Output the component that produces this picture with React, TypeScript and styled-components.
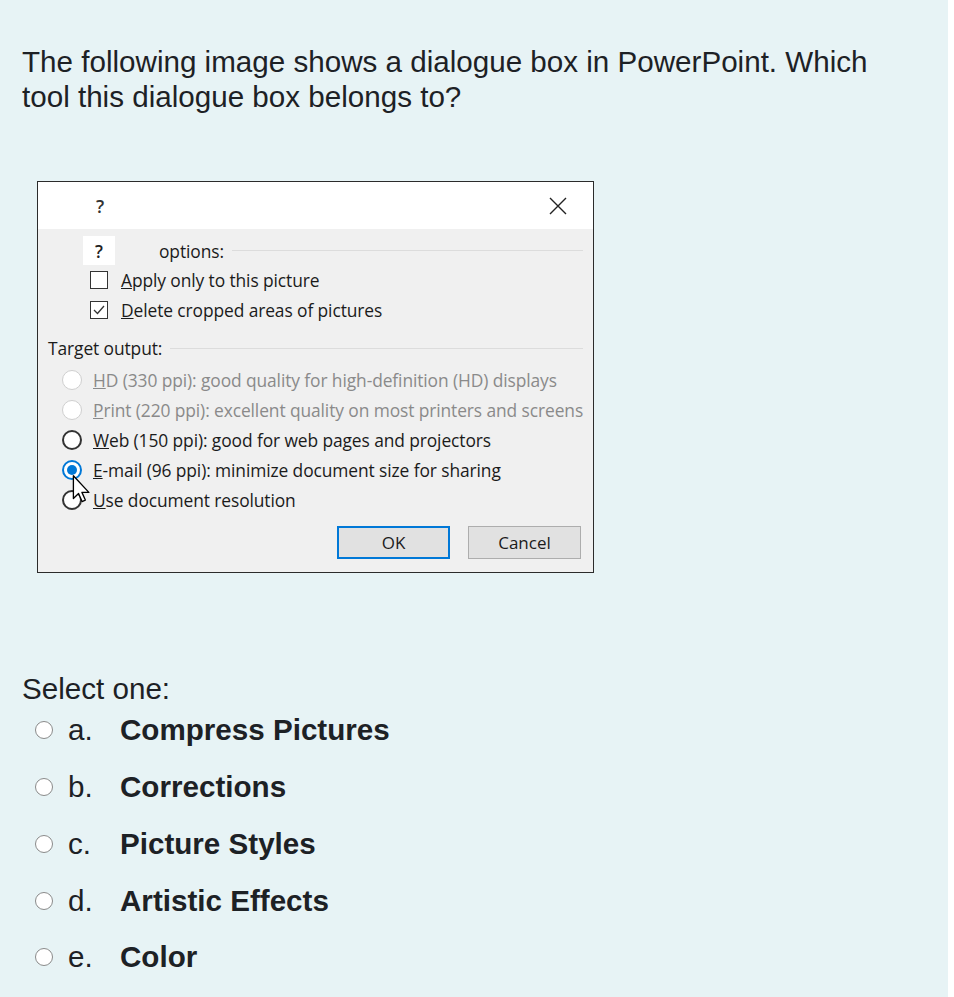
import React from "react";
import styled, { createGlobalStyle } from "styled-components";

const GlobalStyle = createGlobalStyle`
  html, body {
    margin: 0;
    padding: 0;
    background: #ffffff;
  }
`;

const Page = styled.div`
  width: 954px;
  min-height: 997px;
  display: flex;
`;

const Panel = styled.div`
  width: 948px;
  min-height: 997px;
  background: #e7f3f5;
  box-sizing: border-box;
  padding: 44px 0 0 22px;
  font-family: "Liberation Sans", Arial, sans-serif;
  color: #1d2125;
`;

const Question = styled.div`
  font-size: 29.6px;
  line-height: 35px;
  width: 900px;
`;

const Dialog = styled.div`
  position: relative;
  width: 557px;
  box-sizing: border-box;
  margin: 67px 0 0 15px;
  border: 1px solid #2b2b2b;
  font-family: "Open Sans", "Noto Sans", sans-serif;
  font-size: 17.4px;
  font-weight: 500;
  letter-spacing: -0.1px;
  color: #1b1b1b;
`;

const TitleBar = styled.div`
  height: 47px;
  background: #ffffff;
  display: flex;
  align-items: center;
  justify-content: space-between;
  padding: 0 26px 0 58px;
`;

const TitleMark = styled.span`
  font-size: 18px;
  font-weight: 600;
  color: #333;
`;

const DialogBody = styled.div`
  background: #f0f0f0;
  padding: 7px 10px 13px 10px;
  display: flex;
  flex-direction: column;
`;

const GroupHeader = styled.div<{ $indent?: number; $top?: number }>`
  display: flex;
  align-items: center;
  height: ${(p) => (p.$indent ? 29 : 30)}px;
  margin-top: ${(p) => p.$top ?? 0}px;
  padding-left: ${(p) => p.$indent ?? 0}px;
  gap: 8px;
`;

const HelpBox = styled.span`
  width: 32px;
  height: 29px;
  background: #ffffff;
  display: flex;
  align-items: center;
  justify-content: center;
  margin-right: 36px;
  color: #222;
  font-weight: 600;
`;

const Rule = styled.div`
  flex: 1;
  height: 1px;
  background: #dcdcdc;
`;

const OptionRow = styled.div<{ $indent: number; $gap: number }>`
  display: flex;
  align-items: center;
  height: 30px;
  padding-left: ${(p) => p.$indent}px;
  gap: ${(p) => p.$gap}px;
`;

const CheckBox = styled.span`
  width: 16px;
  height: 16px;
  border: 1px solid #333;
  background: #fff;
  display: flex;
  align-items: center;
  justify-content: center;
`;

const DlgRadio = styled.span<{ $state: "off" | "disabled" | "on" }>`
  width: 20px;
  height: 20px;
  flex-shrink: 0;
  box-sizing: border-box;
  border-radius: 50%;
  background: #fff;
  border: ${(p) =>
    p.$state === "disabled"
      ? "1.5px solid #cfcfcf"
      : p.$state === "on"
      ? "2px solid #0078d7"
      : "2px solid #333"};
  display: flex;
  align-items: center;
  justify-content: center;
  &::after {
    content: "";
    display: ${(p) => (p.$state === "on" ? "block" : "none")};
    width: 10px;
    height: 10px;
    border-radius: 50%;
    background: #0078d7;
  }
`;

const DlgLabel = styled.span<{ $disabled?: boolean }>`
  color: ${(p) => (p.$disabled ? "#8a8a8a" : "#1b1b1b")};
  white-space: nowrap;
`;

const RadioList = styled.div`
  display: flex;
  flex-direction: column;
  margin-top: 2px;
`;

const ButtonRow = styled.div`
  display: flex;
  justify-content: flex-end;
  gap: 18px;
  margin-top: 11px;
  padding-right: 2px;
`;

const DlgButton = styled.button<{ $primary?: boolean }>`
  width: 113px;
  height: 33px;
  box-sizing: border-box;
  background: #e1e1e1;
  border: ${(p) => (p.$primary ? "2px solid #0078d7" : "1px solid #adadad")};
  font-family: inherit;
  font-size: 17px;
  font-weight: 500;
  color: #1b1b1b;
  padding: 0;
`;

const Cursor = styled.svg`
  position: absolute;
  left: 34px;
  top: 293px;
`;

const SelectLabel = styled.div`
  font-size: 29.6px;
  line-height: 35px;
  margin-top: 98px;
`;

const Answers = styled.div`
  display: flex;
  flex-direction: column;
  margin-top: -4px;
`;

const AnswerRow = styled.div`
  display: flex;
  align-items: center;
  height: 56.75px;
  padding-left: 13px;
`;

const AnswerRadio = styled.span`
  width: 18px;
  height: 18px;
  box-sizing: border-box;
  border: 1.5px solid #8a8a8a;
  border-radius: 50%;
  background: #fff;
  margin-right: 15px;
`;

const Letter = styled.span`
  font-size: 29.6px;
  width: 52px;
`;

const AnswerText = styled.span`
  font-size: 29.6px;
  font-weight: bold;
`;

const radios: { key: string; rest: string; state: "off" | "disabled" | "on" }[] = [
  { key: "H", rest: "D (330 ppi): good quality for high-definition (HD) displays", state: "disabled" },
  { key: "P", rest: "rint (220 ppi): excellent quality on most printers and screens", state: "disabled" },
  { key: "W", rest: "eb (150 ppi): good for web pages and projectors", state: "off" },
  { key: "E", rest: "-mail (96 ppi): minimize document size for sharing", state: "on" },
  { key: "U", rest: "se document resolution", state: "off" },
];

const answers = [
  ["a.", "Compress Pictures"],
  ["b.", "Corrections"],
  ["c.", "Picture Styles"],
  ["d.", "Artistic Effects"],
  ["e.", "Color"],
];

export default function App() {
  return (
    <Page>
      <GlobalStyle />
      <Panel>
        <Question>
          The following image shows a dialogue box in PowerPoint. Which tool this dialogue box belongs to?
        </Question>
        <Dialog>
          <TitleBar>
            <TitleMark>?</TitleMark>
            <svg width="18" height="18" viewBox="0 0 18 18">
              <path d="M1 1 L17 17 M17 1 L1 17" stroke="#222" strokeWidth="1.4" />
            </svg>
          </TitleBar>
          <DialogBody>
            <GroupHeader $indent={35}>
              <HelpBox>?</HelpBox>
              <span>options:</span>
              <Rule />
            </GroupHeader>
            <OptionRow $indent={42} $gap={13}>
              <CheckBox />
              <DlgLabel>
                <u>A</u>pply only to this picture
              </DlgLabel>
            </OptionRow>
            <OptionRow $indent={42} $gap={13}>
              <CheckBox>
                <svg width="14" height="14" viewBox="0 0 14 14">
                  <path d="M2 7 L5.5 10.5 L12 3" stroke="#333" strokeWidth="1.3" fill="none" />
                </svg>
              </CheckBox>
              <DlgLabel>
                <u>D</u>elete cropped areas of pictures
              </DlgLabel>
            </OptionRow>
            <GroupHeader $top={8}>
              <span>Target output:</span>
              <Rule />
            </GroupHeader>
            <RadioList>
              {radios.map((r) => (
                <OptionRow key={r.key} $indent={14} $gap={11}>
                  <DlgRadio $state={r.state} />
                  <DlgLabel $disabled={r.state === "disabled"}>
                    <u>{r.key}</u>
                    {r.rest}
                  </DlgLabel>
                </OptionRow>
              ))}
            </RadioList>
            <ButtonRow>
              <DlgButton $primary>OK</DlgButton>
              <DlgButton>Cancel</DlgButton>
            </ButtonRow>
          </DialogBody>
          <Cursor width="19" height="28" viewBox="0 0 12 19">
            <path
              d="M0.5 0.5 L0.5 16 L4 12.6 L6.4 18 L8.6 17 L6.3 11.8 L11 11.8 Z"
              fill="#fff"
              stroke="#000"
              strokeWidth="0.9"
              strokeLinejoin="round"
            />
          </Cursor>
        </Dialog>
        <SelectLabel>Select one:</SelectLabel>
        <Answers>
          {answers.map(([l, t]) => (
            <AnswerRow key={l}>
              <AnswerRadio />
              <Letter>{l}</Letter>
              <AnswerText>{t}</AnswerText>
            </AnswerRow>
          ))}
        </Answers>
      </Panel>
    </Page>
  );
}
